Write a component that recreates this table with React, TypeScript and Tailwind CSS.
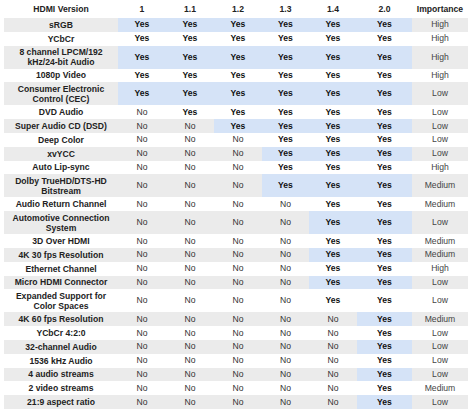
import React from 'react';

type Row = { name: string[]; since: number; importance: string };

const versions = ['1', '1.1', '1.2', '1.3', '1.4', '2.0'];

// since = index of first version with support
const rows: Row[] = [
  { name: ['sRGB'], since: 0, importance: 'High' },
  { name: ['YCbCr'], since: 0, importance: 'High' },
  { name: ['8 channel LPCM/192', 'kHz/24-bit Audio'], since: 0, importance: 'High' },
  { name: ['1080p Video'], since: 0, importance: 'High' },
  { name: ['Consumer Electronic', 'Control (CEC)'], since: 0, importance: 'Low' },
  { name: ['DVD Audio'], since: 1, importance: 'Low' },
  { name: ['Super Audio CD (DSD)'], since: 2, importance: 'Low' },
  { name: ['Deep Color'], since: 3, importance: 'Low' },
  { name: ['xvYCC'], since: 3, importance: 'Low' },
  { name: ['Auto Lip-sync'], since: 3, importance: 'High' },
  { name: ['Dolby TrueHD/DTS-HD', 'Bitstream'], since: 3, importance: 'Medium' },
  { name: ['Audio Return Channel'], since: 4, importance: 'Medium' },
  { name: ['Automotive Connection', 'System'], since: 4, importance: 'Low' },
  { name: ['3D Over HDMI'], since: 4, importance: 'Medium' },
  { name: ['4K 30 fps Resolution'], since: 4, importance: 'Medium' },
  { name: ['Ethernet Channel'], since: 4, importance: 'High' },
  { name: ['Micro HDMI Connector'], since: 4, importance: 'Low' },
  { name: ['Expanded Support for', 'Color Spaces'], since: 4, importance: 'Low' },
  { name: ['4K 60 fps Resolution'], since: 5, importance: 'Medium' },
  { name: ['YCbCr 4:2:0'], since: 5, importance: 'Low' },
  { name: ['32-channel Audio'], since: 5, importance: 'Low' },
  { name: ['1536 kHz Audio'], since: 5, importance: 'Low' },
  { name: ['4 audio streams'], since: 5, importance: 'Low' },
  { name: ['2 video streams'], since: 5, importance: 'Medium' },
  { name: ['21:9 aspect ratio'], since: 5, importance: 'Low' },
];

const cols = 'grid grid-cols-[114px_48px_48px_48px_47px_48px_55px_56px]';

export default function App() {
  return (
    <div
      className="w-[474px] h-[412px] bg-white pl-1 text-[8.6px]"
      style={{ fontFamily: '"Liberation Sans", Arial, sans-serif' }}
    >
      <div className={`${cols} h-[18px] items-center text-center font-bold text-[#222]`}>
        <div>HDMI Version</div>
        {versions.map((v) => (
          <div key={v}>{v}</div>
        ))}
        <div>Importance</div>
      </div>

      {rows.map((row, i) => {
        const shaded = i % 2 === 0;
        const tall = row.name.length > 1;
        return (
          <div
            key={row.name.join(' ')}
            className={`${cols} ${tall ? 'h-[23px]' : 'h-[13.8px]'} text-center`}
          >
            <div
              className={`flex flex-col items-center justify-center font-bold leading-[10px] text-[#222] ${shaded ? 'bg-[#ebebeb]' : ''}`}
            >
              {row.name.map((line) => (
                <span key={line}>{line}</span>
              ))}
            </div>
            {versions.map((v, j) => {
              const yes = j >= row.since;
              const bg = shaded ? (yes ? 'bg-[#d5e3f7]' : 'bg-[#ebebeb]') : '';
              return (
                <div
                  key={v}
                  className={`flex items-center justify-center ${bg} ${yes ? 'font-bold text-[#111]' : 'text-[#333]'}`}
                >
                  {yes ? 'Yes' : 'No'}
                </div>
              );
            })}
            <div
              className={`flex items-center justify-center text-[#444] ${shaded ? 'bg-[#ebebeb]' : ''}`}
            >
              {row.importance}
            </div>
          </div>
        );
      })}
    </div>
  );
}
